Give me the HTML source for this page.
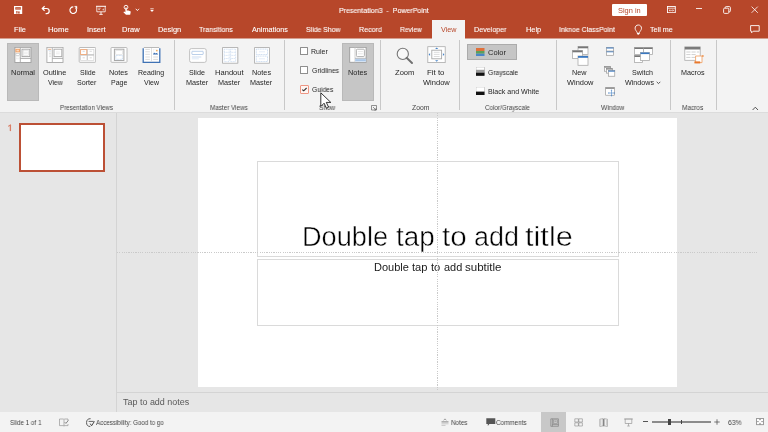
<!DOCTYPE html>
<html><head><meta charset="utf-8"><style>
html,body{margin:0;padding:0;width:768px;height:432px;overflow:hidden;background:#E6E6E6;}
body>div,body>svg{position:absolute;}
.t{font-family:"Liberation Sans",sans-serif;white-space:nowrap;transform-origin:0 0;will-change:transform;}
</style></head><body>
<div style="left:0px;top:0px;width:768px;height:38px;background:#B7472A;"></div>
<div style="left:0px;top:38px;width:768px;height:1px;background:#D59D8E;"></div>
<div style="left:432.4px;top:20px;width:32.8px;height:19px;background:#F3F3F3;"></div>
<div style="left:0px;top:39px;width:768px;height:73px;background:#F3F3F3;"></div>
<div style="left:0px;top:112px;width:768px;height:300px;background:#E6E6E6;"></div>
<div style="left:0px;top:112px;width:768px;height:1px;background:#DCDCDC;"></div>
<div style="left:0px;top:412px;width:768px;height:20px;background:#F3F3F3;"></div>
<div class="t" style="left:339.14px;top:7.02px;font-size:7.3px;line-height:7.3px;color:#FFFFFF;transform:scaleX(0.9667);-webkit-text-stroke:0.1px #fff;">Presentation3&nbsp;&nbsp;-&nbsp;&nbsp;PowerPoint</div>
<div style="left:612.3px;top:3.9px;width:34.5px;height:11.9px;background:#FFFFFF;border-radius:1px;"></div>
<div class="t" style="left:618.27px;top:6.64px;font-size:7.4px;line-height:7.4px;color:#B7472A;transform:scaleX(1.0049);">Sign in</div>
<svg style="left:13px;top:5px" width="10" height="10" viewBox="0 0 10 10"><rect x="1" y="1" width="8.2" height="8" fill="#FFFFFF"/><rect x="2.3" y="2.2" width="5.5" height="2.4" fill="#B7472A"/><path d="M2.8 3.4h4.5" stroke="#E8B8A8" stroke-width="0.5"/><rect x="3.3" y="6" width="1.2" height="2.6" fill="#B7472A"/><rect x="5.2" y="6.4" width="1.4" height="2.2" fill="#B7472A"/></svg>
<svg style="left:40px;top:4px" width="11" height="11" viewBox="0 0 11 11"><path d="M2.4 4.5h4.2a2.6 2.6 0 0 1 0 5.2H5.6" fill="none" stroke="#FFFFFF" stroke-width="1.2"/><path d="M4.6 2.3L2.3 4.5l2.3 2.2" fill="none" stroke="#FFFFFF" stroke-width="1.2"/></svg>
<svg style="left:68px;top:4px" width="11" height="11" viewBox="0 0 11 11"><path d="M5.3 2.9A3.3 3.3 0 1 0 7.6 3.9" fill="none" stroke="#FFFFFF" stroke-width="1.15"/><path d="M6.5 2.3h2.5v2.5z" fill="#FFFFFF" stroke="#FFFFFF" stroke-width="0.4" stroke-linejoin="round"/></svg>
<svg style="left:95px;top:5px" width="12" height="11" viewBox="0 0 12 11"><path d="M1 1.3h10" stroke="#FFFFFF" stroke-width="1"/><path d="M1.8 1.5v5.3h8.4V1.5" fill="none" stroke="#FFFFFF" stroke-width="0.8"/><path d="M6 6.8v2.2M4.3 9.4h3.4" fill="none" stroke="#FFFFFF" stroke-width="0.9"/><path d="M3.2 3.2h2.5M3.2 4.6h1.8" stroke="#FFFFFF" stroke-width="0.6"/><path d="M8.6 3.2v2.4l-1.2-0.6z" fill="#FFFFFF"/></svg>
<svg style="left:122px;top:4px" width="10" height="11" viewBox="0 0 10 11"><circle cx="4" cy="3.2" r="1.9" fill="none" stroke="#FFFFFF" stroke-width="0.9"/><path d="M3.4 3.6v4.6l-1.3-0.8-0.7 0.8 2.6 2.6h4.2l0.6-3.2-2.4-1H4.7V3.6z" fill="#FFFFFF"/></svg>
<svg style="left:134.5px;top:8px" width="5" height="4" viewBox="0 0 5 4"><path d="M0.8 0.8L2.4 2.6L4 0.8" fill="none" stroke="#FFFFFF" stroke-width="0.9"/></svg>
<svg style="left:149.5px;top:7.5px" width="4" height="5" viewBox="0 0 4 5"><path d="M0.3 0.8h3.4" stroke="#FFFFFF" stroke-width="0.8"/><path d="M0.2 2h3.6L2 4z" fill="#FFFFFF"/></svg>
<svg style="left:666.5px;top:5.8px" width="9" height="7.5" viewBox="0 0 9 7.5"><rect x="0.5" y="0.5" width="7.8" height="6.2" fill="none" stroke="#FFFFFF" stroke-width="0.9"/><path d="M0.5 2.2h7.8" stroke="#FFFFFF" stroke-width="0.7"/><path d="M2.2 4.4h4.4M3.2 3.5l-1 0.9 1 0.9M5.6 3.5l1 0.9-1 0.9" fill="none" stroke="#FFFFFF" stroke-width="0.6"/></svg>
<div style="left:696px;top:8.2px;width:6px;height:0.9px;background:rgba(255,255,255,0.85);"></div>
<svg style="left:722.5px;top:5.5px" width="9" height="8" viewBox="0 0 9 8"><rect x="0.6" y="2.2" width="5.2" height="5.2" rx="1" fill="none" stroke="#FFFFFF" stroke-width="0.9"/><path d="M2.2 2.1V1.6a1 1 0 0 1 1-1h3.2a1 1 0 0 1 1 1v3.2a1 1 0 0 1-1 1H5.9" fill="none" stroke="#FFFFFF" stroke-width="0.9"/></svg>
<svg style="left:750.5px;top:5.5px" width="8" height="8" viewBox="0 0 8 8"><path d="M0.6 0.6L6.8 6.8M6.8 0.6L0.6 6.8" stroke="#FFFFFF" stroke-width="0.8"/></svg>
<div class="t" style="left:13.71px;top:26.11px;font-size:7.2px;line-height:7.2px;color:#FFFFFF;transform:scaleX(1.0254);-webkit-text-stroke:0.1px #fff;">File</div>
<div class="t" style="left:48.08px;top:26.11px;font-size:7.2px;line-height:7.2px;color:#FFFFFF;transform:scaleX(1.0806);-webkit-text-stroke:0.1px #fff;">Home</div>
<div class="t" style="left:86.53px;top:26.11px;font-size:7.2px;line-height:7.2px;color:#FFFFFF;transform:scaleX(1.0280);-webkit-text-stroke:0.1px #fff;">Insert</div>
<div class="t" style="left:122.40px;top:26.11px;font-size:7.2px;line-height:7.2px;color:#FFFFFF;transform:scaleX(1.0471);-webkit-text-stroke:0.1px #fff;">Draw</div>
<div class="t" style="left:158.30px;top:26.11px;font-size:7.2px;line-height:7.2px;color:#FFFFFF;transform:scaleX(1.0352);-webkit-text-stroke:0.1px #fff;">Design</div>
<div class="t" style="left:199.36px;top:26.11px;font-size:7.2px;line-height:7.2px;color:#FFFFFF;transform:scaleX(0.9693);-webkit-text-stroke:0.1px #fff;">Transitions</div>
<div class="t" style="left:251.60px;top:26.11px;font-size:7.2px;line-height:7.2px;color:#FFFFFF;transform:scaleX(1.0070);-webkit-text-stroke:0.1px #fff;">Animations</div>
<div class="t" style="left:306.49px;top:26.11px;font-size:7.2px;line-height:7.2px;color:#FFFFFF;transform:scaleX(0.9577);-webkit-text-stroke:0.1px #fff;">Slide Show</div>
<div class="t" style="left:359.43px;top:26.11px;font-size:7.2px;line-height:7.2px;color:#FFFFFF;transform:scaleX(0.9830);-webkit-text-stroke:0.1px #fff;">Record</div>
<div class="t" style="left:400.27px;top:26.11px;font-size:7.2px;line-height:7.2px;color:#FFFFFF;transform:scaleX(0.9201);-webkit-text-stroke:0.1px #fff;">Review</div>
<div class="t" style="left:440.86px;top:26.11px;font-size:7.2px;line-height:7.2px;color:#B7472A;transform:scaleX(0.9777);">View</div>
<div class="t" style="left:474.43px;top:26.11px;font-size:7.2px;line-height:7.2px;color:#FFFFFF;transform:scaleX(0.9903);-webkit-text-stroke:0.1px #fff;">Developer</div>
<div class="t" style="left:525.71px;top:26.11px;font-size:7.2px;line-height:7.2px;color:#FFFFFF;transform:scaleX(1.0264);-webkit-text-stroke:0.1px #fff;">Help</div>
<div class="t" style="left:558.97px;top:26.11px;font-size:7.2px;line-height:7.2px;color:#FFFFFF;transform:scaleX(0.9649);-webkit-text-stroke:0.1px #fff;">Inknoe ClassPoint</div>
<div class="t" style="left:649.76px;top:26.11px;font-size:7.2px;line-height:7.2px;color:#FFFFFF;transform:scaleX(0.9975);-webkit-text-stroke:0.1px #fff;">Tell me</div>
<svg style="left:633.5px;top:23.5px" width="9" height="12" viewBox="0 0 9 12"><path d="M4.3 1C2.3 1 1.1 2.5 1.1 4.2C1.1 6 2.5 7 3.2 8.6L3.6 10.2H5L5.4 8.6C6.1 7 7.5 6 7.5 4.2C7.5 2.5 6.3 1 4.3 1Z" fill="none" stroke="#FFFFFF" stroke-width="0.9"/><path d="M3.4 9.4h1.8" stroke="#FFFFFF" stroke-width="1.2"/></svg>
<svg style="left:749.5px;top:25px" width="10" height="9" viewBox="0 0 10 9"><path d="M0.6 0.6h8.6v5.6H3.2L1.6 7.8V6.2H0.6z" fill="none" stroke="#FFFFFF" stroke-width="0.9"/></svg>
<div style="left:174px;top:40px;width:1px;height:70px;background:#C8C8C8;"></div>
<div style="left:284px;top:40px;width:1px;height:70px;background:#C8C8C8;"></div>
<div style="left:380px;top:40px;width:1px;height:70px;background:#C8C8C8;"></div>
<div style="left:459px;top:40px;width:1px;height:70px;background:#C8C8C8;"></div>
<div style="left:556px;top:40px;width:1px;height:70px;background:#C8C8C8;"></div>
<div style="left:670px;top:40px;width:1px;height:70px;background:#C8C8C8;"></div>
<div style="left:716px;top:40px;width:1px;height:70px;background:#C8C8C8;"></div>
<div style="left:7px;top:43px;width:32px;height:57.7px;background:#C6C6C6;box-sizing:border-box;border:1px solid #B9B9B9;"></div>
<div style="left:342px;top:43px;width:32px;height:57.7px;background:#C6C6C6;box-sizing:border-box;border:1px solid #B9B9B9;"></div>
<div style="left:466.6px;top:44px;width:50.2px;height:15.7px;background:#C5C5C5;box-sizing:border-box;border:1px solid #ABABAB;"></div>
<div class="t" style="left:11.20px;top:69.27px;font-size:7px;line-height:7px;color:#262626;transform:scaleX(1.0639);">Normal</div>
<div class="t" style="left:43.42px;top:69.27px;font-size:7px;line-height:7px;color:#262626;transform:scaleX(1.0506);">Outline</div>
<div class="t" style="left:47.97px;top:78.77px;font-size:7px;line-height:7px;color:#262626;transform:scaleX(0.9657);">View</div>
<div class="t" style="left:79.58px;top:69.27px;font-size:7px;line-height:7px;color:#262626;transform:scaleX(1.0080);">Slide</div>
<div class="t" style="left:77.48px;top:78.77px;font-size:7px;line-height:7px;color:#262626;transform:scaleX(1.0204);">Sorter</div>
<div class="t" style="left:109.42px;top:69.27px;font-size:7px;line-height:7px;color:#262626;transform:scaleX(1.0306);">Notes</div>
<div class="t" style="left:111.15px;top:78.77px;font-size:7px;line-height:7px;color:#262626;transform:scaleX(0.9868);">Page</div>
<div class="t" style="left:138.19px;top:69.27px;font-size:7px;line-height:7px;color:#262626;transform:scaleX(0.9976);">Reading</div>
<div class="t" style="left:143.57px;top:78.77px;font-size:7px;line-height:7px;color:#262626;transform:scaleX(0.9724);">View</div>
<div class="t" style="left:189.38px;top:69.27px;font-size:7px;line-height:7px;color:#262626;transform:scaleX(1.0214);">Slide</div>
<div class="t" style="left:186.32px;top:78.77px;font-size:7px;line-height:7px;color:#262626;transform:scaleX(1.0376);">Master</div>
<div class="t" style="left:215.19px;top:69.27px;font-size:7px;line-height:7px;color:#262626;transform:scaleX(1.0825);">Handout</div>
<div class="t" style="left:218.42px;top:78.77px;font-size:7px;line-height:7px;color:#262626;transform:scaleX(1.0376);">Master</div>
<div class="t" style="left:251.72px;top:69.27px;font-size:7px;line-height:7px;color:#262626;transform:scaleX(1.0421);">Notes</div>
<div class="t" style="left:250.42px;top:78.77px;font-size:7px;line-height:7px;color:#262626;transform:scaleX(1.0328);">Master</div>
<div class="t" style="left:348.11px;top:69.27px;font-size:7px;line-height:7px;color:#262626;transform:scaleX(1.0478);">Notes</div>
<div class="t" style="left:394.57px;top:69.27px;font-size:7px;line-height:7px;color:#262626;transform:scaleX(1.0837);">Zoom</div>
<div class="t" style="left:427.07px;top:69.27px;font-size:7px;line-height:7px;color:#262626;transform:scaleX(1.1224);">Fit to</div>
<div class="t" style="left:422.96px;top:78.77px;font-size:7px;line-height:7px;color:#262626;transform:scaleX(1.0770);">Window</div>
<div class="t" style="left:572.32px;top:69.27px;font-size:7px;line-height:7px;color:#262626;transform:scaleX(1.0315);">New</div>
<div class="t" style="left:566.76px;top:78.77px;font-size:7px;line-height:7px;color:#262626;transform:scaleX(1.0609);">Window</div>
<div class="t" style="left:632.48px;top:69.27px;font-size:7px;line-height:7px;color:#262626;transform:scaleX(1.0179);">Switch</div>
<div class="t" style="left:624.76px;top:78.77px;font-size:7px;line-height:7px;color:#262626;transform:scaleX(1.0212);">Windows</div>
<div class="t" style="left:681.42px;top:69.27px;font-size:7px;line-height:7px;color:#262626;transform:scaleX(1.0291);">Macros</div>
<div class="t" style="left:311.36px;top:47.67px;font-size:7px;line-height:7px;color:#262626;transform:scaleX(0.9732);">Ruler</div>
<div class="t" style="left:311.66px;top:66.77px;font-size:7px;line-height:7px;color:#262626;transform:scaleX(0.9808);">Gridlines</div>
<div class="t" style="left:311.66px;top:86.27px;font-size:7px;line-height:7px;color:#262626;transform:scaleX(0.9586);">Guides</div>
<div class="t" style="left:488.23px;top:48.87px;font-size:7px;line-height:7px;color:#262626;transform:scaleX(1.0714);">Color</div>
<div class="t" style="left:488.26px;top:68.57px;font-size:7px;line-height:7px;color:#262626;transform:scaleX(0.9589);">Grayscale</div>
<div class="t" style="left:488.03px;top:87.97px;font-size:7px;line-height:7px;color:#262626;transform:scaleX(1.0134);">Black and White</div>
<svg style="left:655.8px;top:80.6px" width="5" height="4" viewBox="0 0 5 4"><path d="M0.7 0.8L2.5 2.6L4.3 0.8" fill="none" stroke="#444" stroke-width="0.9"/></svg>
<div class="t" style="left:60.25px;top:105.44px;font-size:6.8px;line-height:6.8px;color:#444444;transform:scaleX(0.9120);">Presentation Views</div>
<div class="t" style="left:210.19px;top:105.44px;font-size:6.8px;line-height:6.8px;color:#444444;transform:scaleX(0.9295);">Master Views</div>
<div class="t" style="left:319.41px;top:105.44px;font-size:6.8px;line-height:6.8px;color:#444444;transform:scaleX(0.9565);">Show</div>
<div class="t" style="left:411.60px;top:105.44px;font-size:6.8px;line-height:6.8px;color:#444444;transform:scaleX(0.9844);">Zoom</div>
<div class="t" style="left:485.39px;top:105.44px;font-size:6.8px;line-height:6.8px;color:#444444;transform:scaleX(0.9202);">Color/Grayscale</div>
<div class="t" style="left:601.47px;top:105.44px;font-size:6.8px;line-height:6.8px;color:#444444;transform:scaleX(0.9638);">Window</div>
<div class="t" style="left:682.48px;top:105.44px;font-size:6.8px;line-height:6.8px;color:#444444;transform:scaleX(0.9525);">Macros</div>
<div style="left:300.3px;top:47px;width:8.2px;height:8.2px;background:#FFFFFF;box-sizing:border-box;border:1px solid #8E8E8E;border-radius:0.5px;"></div>
<div style="left:300.3px;top:66.3px;width:8.2px;height:8.2px;background:#FFFFFF;box-sizing:border-box;border:1px solid #8E8E8E;border-radius:0.5px;"></div>
<div style="left:300.2px;top:85.2px;width:8.6px;height:8.6px;background:#FFF6F3;box-sizing:border-box;border:1.2px solid #EE9684;border-radius:1px;"></div>
<svg style="left:300.2px;top:85.2px" width="9" height="9" viewBox="0 0 9 9"><path d="M2.2 4.6L3.7 5.8L6.6 3" fill="none" stroke="#333" stroke-width="1.1"/></svg>
<svg style="left:371px;top:105px" width="7" height="6" viewBox="0 0 7 6"><path d="M0.5 0.5h5v4.5h-5z" fill="none" stroke="#666" stroke-width="0.7"/><path d="M2 2l3 3M5 3.2V5H3.2" fill="none" stroke="#666" stroke-width="0.7"/></svg>
<svg style="left:752px;top:106px" width="7" height="5" viewBox="0 0 7 5"><path d="M0.6 4L3.3 1.2L6 4" fill="none" stroke="#444" stroke-width="0.9"/></svg>
<svg style="left:14px;top:47px" width="18" height="16" viewBox="0 0 18 16"><rect x="0.9" y="0.3" width="16.1" height="15.2" fill="#fff" stroke="#9E9E9E" stroke-width="0.9"/><path d="M6.3 0.5v15" stroke="#A8A8A8" stroke-width="0.9"/><rect x="1.9" y="2.2" width="3.5" height="2.7" fill="#FBD9BF" stroke="#EE9A5A" stroke-width="0.9"/><rect x="1.9" y="6.4" width="3.5" height="2" fill="#fff" stroke="#BDBDBD" stroke-width="0.6"/><rect x="1.9" y="9.9" width="3.5" height="2" fill="#fff" stroke="#DADADA" stroke-width="0.5"/><rect x="8" y="2.2" width="7.8" height="7.4" fill="#fff" stroke="#A4A4A4" stroke-width="0.9"/><rect x="9.3" y="3.5" width="5.2" height="4.8" fill="none" stroke="#D8D8D8" stroke-width="0.5"/><path d="M10 5.2h3.8M10 6.8h3.8" stroke="#D8D8D8" stroke-width="0.5"/><path d="M6.3 11.4h10.7" stroke="#A4A4A4" stroke-width="0.9"/></svg>
<svg style="left:46px;top:47px" width="18" height="16" viewBox="0 0 18 16"><rect x="0.9" y="0.3" width="16.1" height="15.2" fill="#fff" stroke="#A8A8A8" stroke-width="0.9"/><path d="M6.3 0.5v15" stroke="#B0B0B0" stroke-width="0.9"/><path d="M2.2 2.3h3" stroke="#F3A66E" stroke-width="0.9"/><path d="M2.2 3.2h3" stroke="#9DBCE3" stroke-width="0.4"/><path d="M3 4.8h2.2M3 6.4h2.2M3 8h2.2M3 9.6h2.2" stroke="#D0D0D0" stroke-width="0.6"/><rect x="8" y="2.2" width="7.8" height="7.4" fill="#fff" stroke="#A8A8A8" stroke-width="0.9"/><path d="M10 5h3.8M10 6.8h3.8" stroke="#D8D8D8" stroke-width="0.5"/><path d="M6.3 11.4h10.7" stroke="#A8A8A8" stroke-width="0.9"/></svg>
<svg style="left:78px;top:47px" width="18" height="16" viewBox="0 0 18 16"><rect x="1.2" y="0.5" width="16.5" height="14.8" rx="0.8" fill="#fff" stroke="#B4B4B4" stroke-width="0.9"/><rect x="2.2" y="2.2" width="14" height="11.3" fill="#C4C4C4"/><rect x="2.6" y="2.6" width="6.2" height="4.9" fill="#fff" stroke="#F0A878" stroke-width="0.9"/><rect x="9.8" y="2.6" width="5.8" height="4.6" fill="#fff"/><rect x="2.8" y="8.6" width="5.9" height="4.4" fill="#fff"/><rect x="9.8" y="8.6" width="5.8" height="4.4" fill="#fff"/><path d="M4.6 4.3h2.2M11.6 4.3h2.2M4.6 10.8h2.2M11.6 10.8h2.2" stroke="#D0D0D0" stroke-width="0.8"/></svg>
<svg style="left:110px;top:47px" width="18" height="16" viewBox="0 0 18 16"><rect x="1" y="0.5" width="16" height="14.8" rx="0.8" fill="#fff" stroke="#B4B4B4" stroke-width="0.9"/><rect x="4.4" y="2.2" width="9.5" height="11.3" fill="#fff" stroke="#A8A8A8" stroke-width="1"/><rect x="5.8" y="3.5" width="6.6" height="3.8" fill="#fff" stroke="#D4D4D4" stroke-width="0.5"/><rect x="5.8" y="8.5" width="6.6" height="3.8" fill="#fff" stroke="#A8C4E6" stroke-width="0.6" stroke-dasharray="1 0.5"/></svg>
<svg style="left:141.5px;top:47px" width="19" height="16" viewBox="0 0 19 16"><rect x="1.5" y="0.6" width="16" height="14" fill="#fff"/><path d="M1.2 1.2v14.1h16.6V1.2" fill="none" stroke="#3F72B5" stroke-width="1.3"/><path d="M1.8 0.5h15.4" stroke="#A8A8A8" stroke-width="0.8"/><path d="M9.5 1v13.8" stroke="#D8D8D8" stroke-width="0.8"/><path d="M3.3 2.4h4.6M3.3 4.8h4.6M3.3 7.3h4.6M3.3 10h4.6M3.3 12.4h4.6M11.2 10h4.8M11.2 12.4h4.8" stroke="#CDCDCD" stroke-width="0.7"/><rect x="11.2" y="2.8" width="4.6" height="4.6" fill="#fff" stroke="#E4E4E4" stroke-width="0.3"/><circle cx="14.8" cy="3.6" r="0.9" fill="#F2B060"/><path d="M11 7.6c0.6-1.8 1.6-2.2 2.4-1.2c0.8-0.8 2-0.8 2.8 1.2z" fill="#3F72B5"/></svg>
<svg style="left:188.5px;top:48px" width="18" height="15" viewBox="0 0 18 15"><rect x="0.6" y="0.6" width="16.6" height="13.8" rx="1.8" fill="#fff" stroke="#B4B4B4" stroke-width="0.8"/><rect x="2.9" y="3.3" width="11.3" height="3.2" rx="0.5" fill="none" stroke="#8DB0DC" stroke-width="0.6"/><path d="M2.8 9h9.5" stroke="#A8C4E6" stroke-width="0.6"/><path d="M2.8 10.8h7" stroke="#C8DAF0" stroke-width="0.6"/></svg>
<svg style="left:221.5px;top:46.5px" width="17" height="17" viewBox="0 0 17 17"><rect x="0.6" y="0.6" width="15.2" height="15.6" fill="#fff" stroke="#A8A8A8" stroke-width="0.8"/><path d="M15.8 1v15" stroke="#C8C8C8" stroke-width="0.8"/><g fill="none" stroke="#A8C4E6" stroke-width="0.5" stroke-dasharray="1 0.6"><rect x="2.2" y="2.2" width="5" height="12.4"/><rect x="8.6" y="2.2" width="5" height="12.4"/><path d="M2.2 5.3h5M2.2 8.4h5M2.2 11.5h5M8.6 5.3h5M8.6 8.4h5M8.6 11.5h5"/></g></svg>
<svg style="left:253.5px;top:46.5px" width="16" height="17" viewBox="0 0 16 17"><rect x="0.6" y="0.6" width="14.8" height="15.6" fill="#fff" stroke="#A8A8A8" stroke-width="0.8"/><g fill="none" stroke="#A8C4E6" stroke-width="0.55" stroke-dasharray="1.2 0.5"><rect x="2.3" y="2.1" width="11.2" height="5.4"/><rect x="2.3" y="9.1" width="11.2" height="5.4"/></g><path d="M5 4.8h6M5 11.8h6" stroke="#C8DAF0" stroke-width="0.5"/></svg>
<svg style="left:349px;top:47px" width="18" height="16" viewBox="0 0 18 16"><rect x="0.7" y="0.3" width="16.4" height="15" fill="#fff" stroke="#9A9A9A" stroke-width="0.9"/><path d="M6 0.5v14.8" stroke="#C8C8C8" stroke-width="0.8"/><rect x="7.4" y="2.2" width="8" height="7.4" rx="1" fill="#fff" stroke="#A8A8A8" stroke-width="0.9"/><path d="M8.9 4.6h5M8.9 6.8h5" stroke="#CFCFCF" stroke-width="0.5"/><rect x="6" y="11.4" width="11.1" height="3.4" fill="#CFE0F4"/><path d="M6.3 13.1h10.5" stroke="#7FA8DA" stroke-width="0.8"/><path d="M6 11.3h11" stroke="#9A9A9A" stroke-width="0.6"/></svg>
<svg style="left:395.5px;top:46.5px" width="17" height="17" viewBox="0 0 17 17"><circle cx="6.8" cy="6.9" r="5.6" fill="#fff" fill-opacity="0.4" stroke="#777" stroke-width="1.1"/><path d="M10.6 10.8L16 16" stroke="#707070" stroke-width="1.9" stroke-linecap="round"/></svg>
<svg style="left:426.5px;top:46px" width="19" height="17" viewBox="0 0 19 17"><rect x="0.8" y="0.7" width="17.4" height="15.9" fill="#fff" stroke="#ABABAB" stroke-width="0.8"/><rect x="4.8" y="4.2" width="9.8" height="8.6" fill="#fff" stroke="#A8A8A8" stroke-width="0.9"/><path d="M6.8 6.3h5.8M6.8 8.4h5.8M6.8 10.5h5.8" stroke="#C4C4C4" stroke-width="0.6"/><path d="M9.7 1.6l1.6 1.5H8.1zM9.7 15.8l1.6-1.5H8.1zM1.6 8.5l1.5-1.6v3.2zM17.4 8.5l-1.5-1.6v3.2z" fill="#4A86C8"/></svg>
<svg style="left:476px;top:47.5px" width="8.5" height="8.5" viewBox="0 0 8.5 8.5"><rect x="0" y="0" width="8.5" height="3" fill="#E0703A"/><rect x="0" y="3" width="8.5" height="2.7" fill="#5CA05A"/><rect x="0" y="5.7" width="8.5" height="2.8" fill="#4A86C8"/></svg>
<svg style="left:476px;top:67.2px" width="8.5" height="8.8" viewBox="0 0 8.5 8.8"><rect x="0" y="0" width="8.5" height="8.8" fill="#fff" stroke="#888" stroke-width="0.4"/><rect x="0" y="2.8" width="8.5" height="2.8" fill="#9A9A9A"/><rect x="0" y="5.6" width="8.5" height="3.2" fill="#111"/></svg>
<svg style="left:476px;top:86.6px" width="8.5" height="8.8" viewBox="0 0 8.5 8.8"><rect x="0" y="0" width="8.5" height="8.8" fill="#fff" stroke="#999" stroke-width="0.4"/><rect x="0" y="4.6" width="8.5" height="4.2" fill="#111"/></svg>
<svg style="left:571.5px;top:45.5px" width="17" height="20" viewBox="0 0 17 20"><rect x="6" y="0.5" width="10" height="8" fill="#fff" stroke="#ABABAB" stroke-width="0.8"/><rect x="6" y="0.5" width="10" height="1.8" fill="#777"/><rect x="0.5" y="4.5" width="10" height="8" fill="#fff" stroke="#ABABAB" stroke-width="0.8"/><rect x="0.5" y="4.5" width="10" height="1.8" fill="#777"/><rect x="6" y="10" width="10" height="9.3" fill="#fff" stroke="#ABABAB" stroke-width="0.8"/><rect x="6" y="10" width="10" height="1.8" fill="#3A78C0"/></svg>
<svg style="left:605.5px;top:47px" width="8" height="9" viewBox="0 0 8 9"><rect x="0.5" y="0.5" width="7" height="7.8" fill="#fff" stroke="#9A9A9A" stroke-width="0.7"/><path d="M0.5 1h7M0.5 4.8h7" stroke="#3A78C0" stroke-width="1.1"/><path d="M0.5 4h7" stroke="#9A9A9A" stroke-width="0.6"/></svg>
<svg style="left:604px;top:66px" width="12" height="11" viewBox="0 0 12 11"><rect x="0.6" y="0.6" width="6" height="4.6" fill="#fff" stroke="#8A8A8A" stroke-width="0.6"/><path d="M0.6 1.1h6" stroke="#777" stroke-width="1"/><rect x="2.4" y="2.5" width="6" height="4.6" fill="#fff" stroke="#8A8A8A" stroke-width="0.6"/><path d="M2.4 3h6" stroke="#777" stroke-width="1"/><rect x="4.4" y="4.6" width="6.4" height="5.6" fill="#fff" stroke="#8A8A8A" stroke-width="0.6"/><path d="M4.4 5.1h6.4" stroke="#3A78C0" stroke-width="1.1"/></svg>
<svg style="left:604.5px;top:86.5px" width="10" height="10" viewBox="0 0 10 10"><rect x="0.7" y="0.6" width="8.6" height="7.6" fill="#fff" stroke="#8A8A8A" stroke-width="0.6"/><path d="M0.7 1.2h8.6" stroke="#777" stroke-width="1.1"/><path d="M6.5 3.3v5.4M3.8 6h5.4" stroke="#4A86C8" stroke-width="0.6"/><path d="M6.5 2.6l0.9 1h-1.8zM6.5 9.4l0.9-1h-1.8zM3.1 6l1-0.9v1.8zM9.9 6l-1-0.9v1.8z" fill="#3A78C0"/></svg>
<svg style="left:633.5px;top:46.5px" width="19" height="16" viewBox="0 0 19 16"><rect x="0.5" y="0.5" width="9" height="7" fill="#fff" stroke="#ABABAB" stroke-width="0.8"/><rect x="0.5" y="0.5" width="9" height="1.5" fill="#777"/><rect x="9.5" y="0.5" width="9" height="7" fill="#fff" stroke="#ABABAB" stroke-width="0.8"/><rect x="9.5" y="0.5" width="9" height="1.5" fill="#777"/><rect x="0.5" y="8.5" width="8" height="7" fill="#fff" stroke="#ABABAB" stroke-width="0.8"/><rect x="0.5" y="8.5" width="8" height="1.5" fill="#777"/><rect x="6.5" y="5.5" width="9" height="8" fill="#fff" stroke="#ABABAB" stroke-width="0.8"/><rect x="6.5" y="5.5" width="9" height="1.6" fill="#3A78C0"/></svg>
<svg style="left:683.5px;top:46px" width="20" height="18" viewBox="0 0 20 18"><rect x="0.8" y="0.9" width="15.4" height="13.4" fill="#fff" stroke="#ABABAB" stroke-width="0.8"/><rect x="0.8" y="0.9" width="15.4" height="2.6" fill="#7A7A7A"/><path d="M2.3 6h4.2M7.5 6h4.2M12.8 6h2.4M2.3 8.6h4.2M7.5 8.6h4.2M2.3 11.4h4.2M7.5 11.4h4.2" stroke="#D0D0D0" stroke-width="1"/><path d="M11.6 10h6.4v6.6h-6.4z" fill="#fff" stroke="#EE9A5A" stroke-width="0.8"/><circle cx="18.8" cy="9.9" r="1" fill="#EE9A5A"/><rect x="10.4" y="15.4" width="5.8" height="2" fill="#E8782C"/></svg>
<svg style="left:320.3px;top:91.6px" width="13" height="18" viewBox="0 0 13 18"><path d="M0.8 0.8V14.5L4.1 11.2L6.4 16.2L8.6 15.2L6.3 10.4H10.8Z" fill="#fff" stroke="#111" stroke-width="0.85" stroke-linejoin="miter"/></svg>
<div style="left:116px;top:113px;width:1px;height:299px;background:#D4D4D4;"></div>
<svg style="left:7.2px;top:123.6px" width="6" height="8" viewBox="0 0 6 8"><path d="M3.4 0.9V7.1" stroke="#DA7E66" stroke-width="1.3"/><path d="M3.9 0.8L1.2 2.4" stroke="#DA7E66" stroke-width="1.1"/></svg>
<div style="left:19px;top:123px;width:85.5px;height:49px;background:#FFFFFF;box-sizing:border-box;border:2px solid #BC5035;"></div>
<div style="left:198px;top:118px;width:479px;height:269px;background:#FFFFFF;"></div>
<div style="left:257px;top:161px;width:362px;height:96px;background:transparent;box-sizing:border-box;border:1px solid #DADADA;"></div>
<div style="left:257px;top:259px;width:362px;height:67px;background:transparent;box-sizing:border-box;border:1px solid #DADADA;"></div>
<div class="t" style="left:301.63px;top:223.91px;font-size:26.8px;line-height:26.8px;color:#000000;transform:scaleX(1.0130);-webkit-text-stroke:0.45px #fff;">Double</div>
<div class="t" style="left:395.88px;top:223.91px;font-size:26.8px;line-height:26.8px;color:#000000;transform:scaleX(1.0370);-webkit-text-stroke:0.45px #fff;">tap</div>
<div class="t" style="left:441.76px;top:223.91px;font-size:26.8px;line-height:26.8px;color:#000000;transform:scaleX(1.1051);-webkit-text-stroke:0.45px #fff;">to</div>
<div class="t" style="left:473.52px;top:223.91px;font-size:26.8px;line-height:26.8px;color:#000000;transform:scaleX(1.0046);-webkit-text-stroke:0.45px #fff;">add</div>
<div class="t" style="left:525.44px;top:223.91px;font-size:26.8px;line-height:26.8px;color:#000000;transform:scaleX(1.1468);-webkit-text-stroke:0.45px #fff;">title</div>
<div class="t" style="left:373.82px;top:261.96px;font-size:10.8px;line-height:10.8px;color:#1A1A1A;transform:scaleX(1.0200);">Double</div>
<div class="t" style="left:411.93px;top:261.96px;font-size:10.8px;line-height:10.8px;color:#1A1A1A;transform:scaleX(1.0334);">tap</div>
<div class="t" style="left:430.73px;top:261.96px;font-size:10.8px;line-height:10.8px;color:#1A1A1A;transform:scaleX(1.0328);">to</div>
<div class="t" style="left:443.56px;top:261.96px;font-size:10.8px;line-height:10.8px;color:#1A1A1A;transform:scaleX(1.0150);">add</div>
<div class="t" style="left:464.65px;top:261.96px;font-size:10.8px;line-height:10.8px;color:#1A1A1A;transform:scaleX(1.0680);">subtitle</div>
<div style="left:117px;top:252px;width:640px;height:1px;background:repeating-linear-gradient(90deg,#CACACA 0 1.2px,transparent 1.2px 2.3px);"></div>
<div style="left:437px;top:113px;width:1px;height:278px;background:repeating-linear-gradient(180deg,#CACACA 0 1.2px,transparent 1.2px 2.3px);"></div>
<div style="left:117px;top:392px;width:651px;height:1px;background:#D4D4D4;"></div>
<div class="t" style="left:122.92px;top:398.07px;font-size:8.9px;line-height:8.9px;color:#5A5A5A;transform:scaleX(1.0088);">Tap to add notes</div>
<div class="t" style="left:10.32px;top:419.27px;font-size:7px;line-height:7px;color:#444444;transform:scaleX(0.8961);">Slide 1 of 1</div>
<div class="t" style="left:96.20px;top:419.27px;font-size:7px;line-height:7px;color:#444444;transform:scaleX(0.8839);">Accessibility: Good to go</div>
<div class="t" style="left:451.00px;top:419.27px;font-size:7px;line-height:7px;color:#444444;transform:scaleX(0.8989);">Notes</div>
<div class="t" style="left:496.28px;top:419.27px;font-size:7px;line-height:7px;color:#444444;transform:scaleX(0.9053);">Comments</div>
<div class="t" style="left:728.46px;top:419.27px;font-size:7px;line-height:7px;color:#444444;transform:scaleX(0.9623);">63%</div>
<svg style="left:59px;top:418px" width="10" height="9" viewBox="0 0 10 9"><path d="M0.5 1h3.8l0.7 0.6v6.6l-0.7-0.6H0.5z" fill="none" stroke="#888" stroke-width="0.6"/><path d="M5 1.6l0.7-0.6H9v2M9 6v1.6H5.7L5 8.2" fill="none" stroke="#888" stroke-width="0.6"/><path d="M5.8 4.2l1.1 1.2L9.2 2.6" fill="none" stroke="#555" stroke-width="0.7"/></svg>
<svg style="left:85px;top:417px" width="11" height="11" viewBox="0 0 11 11"><path d="M5.6 1.7A3.9 3.9 0 1 0 5.3 9.5" fill="none" stroke="#5A5A5A" stroke-width="1"/><path d="M3.6 4.4h5.2" stroke="#555" stroke-width="0.9"/><path d="M5.2 6.6L6.6 8.8L9.4 4.4" fill="none" stroke="#444" stroke-width="1"/></svg>
<svg style="left:441px;top:418px" width="8" height="9" viewBox="0 0 8 9"><path d="M2.6 2.2L4 0.9L5.4 2.2" fill="none" stroke="#777" stroke-width="0.7"/><path d="M0.5 3.9h7" stroke="#666" stroke-width="0.8"/><path d="M0.5 5.8h7M0.5 7.4h4" stroke="#aaa" stroke-width="0.6"/></svg>
<svg style="left:485.5px;top:418px" width="10" height="9" viewBox="0 0 10 9"><path d="M0.3 0.3h9v5.8H3.4L1.8 8V6.1H0.3z" fill="#555"/></svg>
<div style="left:541px;top:412px;width:25px;height:20px;background:#C8C8C8;"></div>
<svg style="left:549.5px;top:418px" width="10" height="9" viewBox="0 0 10 9"><path d="M0.8 0.8h7.6v7.5H0.8zM2.4 0.8v7.5M2.4 6.6h6" fill="none" stroke="#777" stroke-width="0.6"/><rect x="3.6" y="1.9" width="3.7" height="3.5" fill="none" stroke="#888" stroke-width="0.55"/><path d="M4.6 4.2a0.9 0.9 0 0 1 1.8 0" fill="none" stroke="#888" stroke-width="0.5"/></svg>
<svg style="left:574px;top:418px" width="10" height="9" viewBox="0 0 10 9"><path d="M0.8 0.8h3.6v3.2H0.8zM4.8 0.8h3.6v3.2H4.8zM0.8 4.8h3.6v3.2H0.8zM4.8 4.8h3.6v3.2H4.8z" fill="none" stroke="#8A8A8A" stroke-width="0.6"/></svg>
<svg style="left:599px;top:418px" width="10" height="9" viewBox="0 0 10 9"><path d="M0.8 1.2l3.2-0.5v7.2l-3.2 0.5zM8.4 1.2l-3.2-0.5v7.2l3.2 0.5z" fill="none" stroke="#8A8A8A" stroke-width="0.6"/><path d="M4.6 0.8v7.5" stroke="#777" stroke-width="0.9"/><path d="M1.8 2v5M7.4 2v5" stroke="#aaa" stroke-width="0.5"/></svg>
<svg style="left:624px;top:418px" width="9" height="9" viewBox="0 0 9 9"><path d="M0.3 1h8.4" stroke="#777" stroke-width="0.8"/><path d="M1.2 1.2v4.3h6.6V1.2M4.5 5.5v2.3M3.2 8h2.6" fill="none" stroke="#888" stroke-width="0.6"/></svg>
<div style="left:643.2px;top:421.3px;width:4.8px;height:0.9px;background:#555;"></div>
<div style="left:651.5px;top:421.2px;width:59.2px;height:1.5px;background:#8C8C8C;"></div>
<div style="left:667.8px;top:418.6px;width:3.4px;height:6.9px;background:#444;"></div>
<div style="left:680.6px;top:419.5px;width:1px;height:4.5px;background:#444;"></div>
<svg style="left:714px;top:418.5px" width="6" height="6" viewBox="0 0 6 6"><path d="M3 0.3v5.4M0.3 3h5.4" stroke="#555" stroke-width="0.8"/></svg>
<svg style="left:755.5px;top:418.3px" width="8" height="7.5" viewBox="0 0 8 7.5"><rect x="0.6" y="0.5" width="6.8" height="6.2" fill="#fff" stroke="#858585" stroke-width="0.8"/><path d="M3.2 1h1.6L4 2.6zM3.2 6.2h1.6L4 4.6z" fill="#666"/><path d="M1 3.6h1.8M5.2 3.6H7" stroke="#888" stroke-width="0.8"/></svg>
</body></html>
